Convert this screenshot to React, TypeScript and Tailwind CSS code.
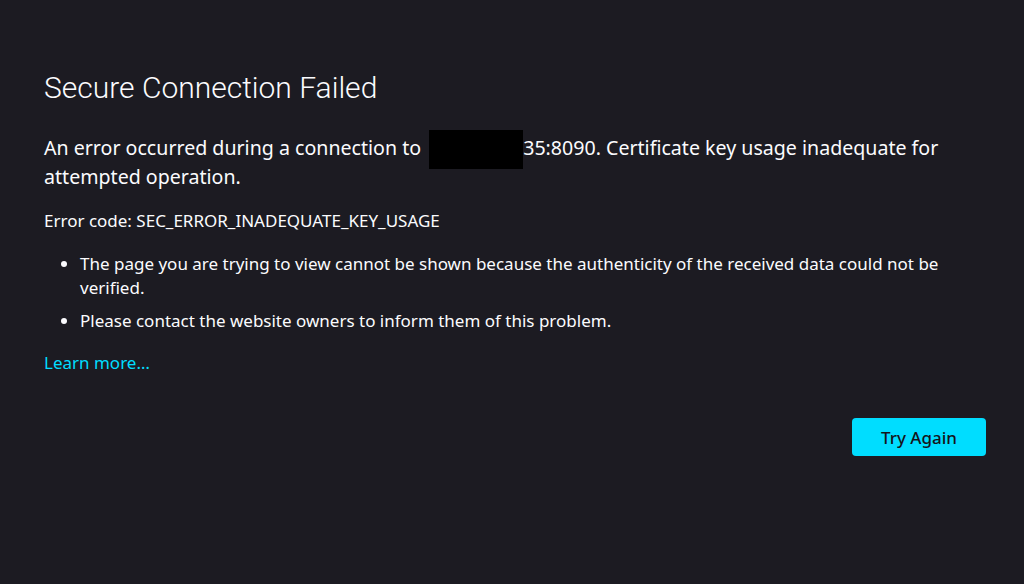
export default function App() {
  return (
    <div
      className="w-[1024px] h-[584px] bg-[#1c1b22] text-[#fbfbfe] overflow-hidden"
      style={{ fontFamily: '"Noto Sans", "Open Sans", sans-serif' }}
    >
      <div className="w-[942px] ml-[44px] pt-[66px] flex flex-col">
        <h1
          className="text-[30px] leading-[44px] font-light"
          style={{ fontFamily: 'Roboto, "Noto Sans", sans-serif' }}
        >
          Secure Connection Failed
        </h1>

        <p className="mt-[24px] text-[19.6px] leading-[27px]">
          An error occurred during a connection to{" "}
          <span className="inline-block align-middle -my-[6px] ml-[3px] w-[94px] h-[39px] bg-black" />
          35:8090. Certificate key usage inadequate for attempted operation.
        </p>

        <p className="mt-[19px] text-[17px] leading-[24px]">
          Error code: SEC_ERROR_INADEQUATE_KEY_USAGE
        </p>

        <ul className="mt-[19px] pl-[36px] list-disc text-[17px] leading-[24px] flex flex-col gap-[9px]">
          <li>
            The page you are trying to view cannot be shown because the
            authenticity of the received data could not be verified.
          </li>
          <li>Please contact the website owners to inform them of this problem.</li>
        </ul>

        <a href="#" className="mt-[18px] text-[17px] leading-[24px] text-[#00ddff]">
          Learn more…
        </a>

        <div className="mt-[43px] flex justify-end">
          <button
            type="button"
            className="w-[134px] h-[38px] rounded-[4px] bg-[#00ddff] text-[#15141a] text-[17px] font-medium"
          >
            Try Again
          </button>
        </div>
      </div>
    </div>
  );
}
